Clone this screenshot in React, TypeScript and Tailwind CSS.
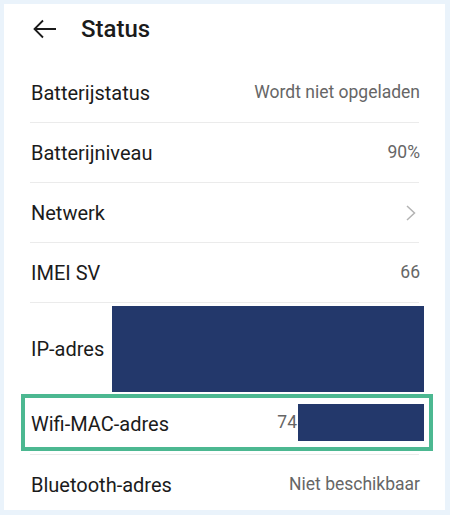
import React from "react";

const font = { fontFamily: "Roboto, 'Noto Sans', sans-serif" };

function Row({ label, value, chevron }: { label: string; value?: string; chevron?: boolean }) {
  return (
    <div className="mx-[26px] h-[60px] shrink-0 flex items-center justify-between border-b border-[#ebebeb]">
      <span className="text-[20px] text-[#1b1b1b] pl-[1px]">{label}</span>
      {value && <span className="text-[17.5px] text-[#666666] mr-[-1px]">{value}</span>}
      {chevron && (
        <svg width="10" height="16" viewBox="0 0 10 16" className="mr-[3px]">
          <path d="M1 1 L8.5 8 L1 15" fill="none" stroke="#b3b3b3" strokeWidth="1.5" />
        </svg>
      )}
    </div>
  );
}

export default function App() {
  return (
    <div className="w-[450px] h-[515px] bg-[#eaf3fb] pl-[4px] pt-[4px] pr-[5px] pb-[5px]" style={font}>
      <div className="w-full h-full bg-white flex flex-col overflow-hidden">
        <div className="h-[59px] shrink-0 flex items-center pl-[29px] pb-[9px]">
          <svg width="24" height="20" viewBox="0 0 24 20">
            <path d="M23 10 H2 M10 1.5 L1.5 10 L10 18.5" fill="none" stroke="#1b1b1b" strokeWidth="1.8" />
          </svg>
          <span className="ml-[24px] text-[24px] font-medium text-[#1b1b1b] leading-none">Status</span>
        </div>
        <Row label="Batterijstatus" value="Wordt niet opgeladen" />
        <Row label="Batterijniveau" value="90%" />
        <Row label="Netwerk" chevron />
        <Row label="IMEI SV" value="66" />
        <div className="relative mx-[26px] h-[91px] shrink-0 flex items-center">
          <span className="text-[20px] text-[#1b1b1b] pl-[1px]">IP-adres</span>
          <div className="absolute left-[82px] right-[-5px] top-[3px] h-[86px] bg-[#23386b]" />
        </div>
        <div className="relative mx-[26px] h-[61px] shrink-0 flex items-center justify-between border-b border-[#ebebeb]">
          <span className="text-[20px] text-[#1b1b1b] pl-[1px]">Wifi-MAC-adres</span>
          <div className="flex items-center mr-[-5px] mt-[-3px]">
            <span className="text-[17.5px] text-[#666666]">74</span>
            <div className="w-[126px] h-[37px] bg-[#23386b] ml-[1px]" />
          </div>
          <div className="absolute left-[-9px] right-[-14px] top-0 h-[57px] border-[4px] border-[#4cb891]" />
        </div>
        <Row label="Bluetooth-adres" value="Niet beschikbaar" />
      </div>
    </div>
  );
}
